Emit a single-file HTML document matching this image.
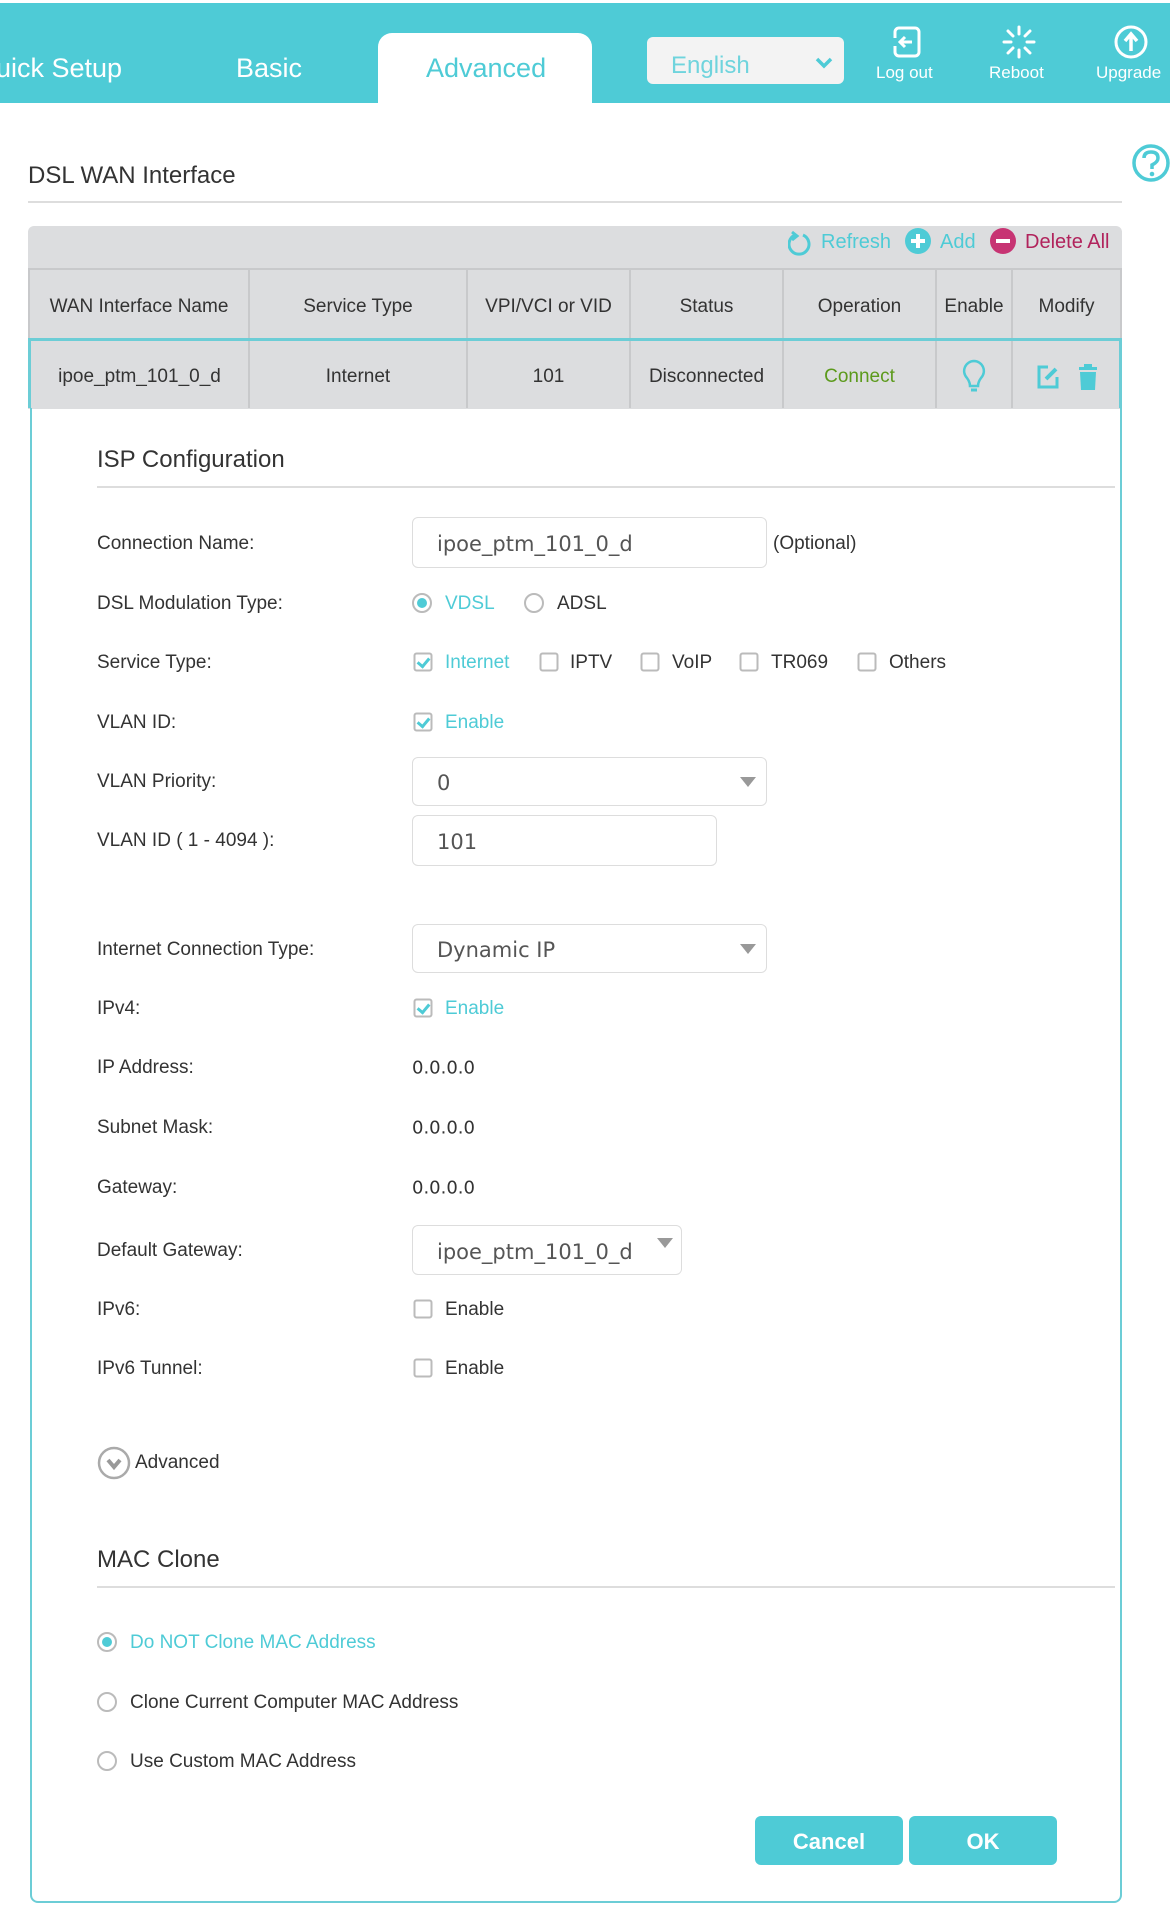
<!DOCTYPE html>
<html><head><meta charset="utf-8"><style>
*{margin:0;padding:0;box-sizing:border-box}
body{width:1170px;height:1929px;background:#fff;position:relative;overflow:hidden;font-family:"Liberation Sans",sans-serif;color:#333}
.a{position:absolute;white-space:nowrap}
.hd{position:absolute;left:0;top:3px;width:1170px;height:100px;background:#4ecbd6}
.nav{color:#fff;font-size:27px;top:53px}
.ic{color:#fff;font-size:17px;top:63px}
.lbl{left:97px;font-size:19px;color:#333;transform:translateY(-45%)}
.val{font-size:19px;transform:translateY(-45%)}
.box{position:absolute;border:1px solid #ddd;border-radius:6px;background:#fff;font-family:"DejaVu Sans",sans-serif;font-size:21px;color:#555;padding-left:24px;padding-top:3px;display:flex;align-items:center}
.tri{position:absolute;right:10px;top:50%;margin-top:-5px;width:0;height:0;border-left:8px solid transparent;border-right:8px solid transparent;border-top:10px solid #999}
.cb{position:absolute;width:19px;height:19px;border:2px solid #bbb;border-radius:3px;background:#fff;transform:translate(-50%,-50%)}
.cb.on::after{content:"";position:absolute;left:4px;top:1px;width:5px;height:9px;border:solid #4ecbd6;border-width:0 3px 3px 0;transform:rotate(40deg)}
.rd{position:absolute;width:20px;height:20px;border:2px solid #bbb;border-radius:50%;background:#fff;transform:translate(-50%,-50%)}
.rd.on::after{content:"";position:absolute;left:3px;top:3px;width:10px;height:10px;border-radius:50%;background:#4ecbd6}
.t{color:#4ecbd6}
.th{position:absolute;top:269px;height:70px;display:flex;align-items:center;justify-content:center;font-size:19px;color:#333;border-right:2px solid #c8c9cb;padding-top:6px}
.td{position:absolute;top:341px;height:67px;display:flex;align-items:center;justify-content:center;font-size:19px;color:#333;border-right:2px solid #c8c9cb;padding-top:4px}
.btn{position:absolute;top:1816px;height:49px;width:148px;background:#4ecbd6;border-radius:6px;color:#fff;font-weight:bold;font-size:22px;display:flex;align-items:center;justify-content:center;padding-top:3px}
</style></head><body>
<div class="hd"></div>
<div class="a nav" style="left:-4px">uick Setup</div>
<div class="a nav" style="left:236px">Basic</div>
<div class="a" style="left:378px;top:33px;width:214px;height:70px;background:#fff;border-radius:14px 14px 0 0"></div>
<div class="a nav" style="left:426px;color:#4ecbd6">Advanced</div>
<div class="a" style="left:647px;top:37px;width:197px;height:47px;background:#f3f3f3;border-radius:6px"></div>
<div class="a" style="left:671px;top:52px;font-size:24px;color:#6fd4dd">English</div>
<svg class="a" style="left:814px;top:56px" width="20" height="14" viewBox="0 0 20 14"><path d="M3 3 L10 10 L17 3" stroke="#4ecbd6" stroke-width="3.5" fill="none"/></svg>
<svg class="a" style="left:892px;top:25px" width="30" height="34" viewBox="0 0 30 34"><rect x="3" y="3" width="24" height="28" rx="4" fill="none" stroke="#fff" stroke-width="3"/><path d="M9 17 H20 M13 12 L8 17 L13 22" stroke="#fff" stroke-width="3" fill="none"/><rect x="0" y="13" width="5" height="8" fill="#4ecbd6"/></svg>
<div class="a ic" style="left:876px">Log out</div>
<svg class="a" style="left:1001px;top:24px" width="36" height="36" viewBox="0 0 36 36" stroke="#fff" stroke-width="3" stroke-linecap="round"><path d="M18 3V10 M18 26V33 M3 18H10 M26 18H33 M7 7L12 12 M24 24L29 29 M29 7L24 12 M12 24L7 29"/></svg>
<div class="a ic" style="left:989px">Reboot</div>
<svg class="a" style="left:1113px;top:24px" width="36" height="36" viewBox="0 0 36 36"><circle cx="18" cy="18" r="15" fill="none" stroke="#fff" stroke-width="3"/><path d="M18 27V12 M12 17L18 10L24 17" stroke="#fff" stroke-width="3.5" fill="none"/></svg>
<div class="a ic" style="left:1096px">Upgrade</div>
<svg class="a" style="left:1131px;top:143px" width="40" height="40" viewBox="0 0 40 40"><circle cx="20" cy="20" r="17" fill="none" stroke="#4ecbd6" stroke-width="3.5"/><path d="M13 15 Q13 9 20 9 Q27 9 27 15 Q27 19 21 22 V26" stroke="#4ecbd6" stroke-width="3.5" fill="none"/><circle cx="21" cy="31" r="2.3" fill="#4ecbd6"/></svg>

<div class="a" style="left:28px;top:162px;font-size:24px;color:#333">DSL WAN Interface</div>
<div class="a" style="left:28px;top:201px;width:1094px;height:2px;background:#ddd"></div>

<div class="a" style="left:28px;top:226px;width:1094px;height:183px;background:#dcdddf;border-radius:6px 6px 0 0"></div>
<svg class="a" style="left:788px;top:229px" width="24" height="28" viewBox="0 0 24 28"><path d="M7 6 A10 10 0 1 0 15 6" stroke="#4ecbd6" stroke-width="3" fill="none"/><path d="M4 3 L9 7 L4 11" stroke="#4ecbd6" stroke-width="3" fill="none"/></svg>
<div class="a" style="left:821px;top:231px;font-size:20px;color:#4ecbd6">Refresh</div>
<svg class="a" style="left:905px;top:228px" width="26" height="26" viewBox="0 0 26 26"><circle cx="13" cy="13" r="13" fill="#4ecbd6"/><path d="M13 6V20 M6 13H20" stroke="#fff" stroke-width="4"/></svg>
<div class="a" style="left:940px;top:231px;font-size:20px;color:#4ecbd6">Add</div>
<svg class="a" style="left:990px;top:228px" width="26" height="26" viewBox="0 0 26 26"><circle cx="13" cy="13" r="13" fill="#c73473"/><path d="M6 13H20" stroke="#fff" stroke-width="4"/></svg>
<div class="a" style="left:1025px;top:231px;font-size:20px;color:#b1235c">Delete All</div>

<div class="a" style="left:28px;top:268px;width:1094px;height:2px;background:#c8c9cb"></div>
<div class="th" style="left:28px;width:222px;border-left:2px solid #c8c9cb">WAN Interface Name</div>
<div class="th" style="left:250px;width:218px">Service Type</div>
<div class="th" style="left:468px;width:163px">VPI/VCI or VID</div>
<div class="th" style="left:631px;width:153px">Status</div>
<div class="th" style="left:784px;width:153px">Operation</div>
<div class="th" style="left:937px;width:76px">Enable</div>
<div class="th" style="left:1013px;width:109px">Modify</div>
<div class="a" style="left:28px;top:338px;width:1094px;height:3px;background:#6ccdd6"></div>
<div class="td" style="left:28px;width:222px;border-left:3px solid #6ccdd6">ipoe_ptm_101_0_d</div>
<div class="td" style="left:250px;width:218px">Internet</div>
<div class="td" style="left:468px;width:163px">101</div>
<div class="td" style="left:631px;width:153px">Disconnected</div>
<div class="td" style="left:784px;width:153px;color:#5c9a1c">Connect</div>
<div class="td" style="left:937px;width:76px"><svg width="26" height="36" viewBox="0 0 26 36"><path d="M13 2 A10 10 0 0 0 6 19 Q9 23 9 27 H17 Q17 23 20 19 A10 10 0 0 0 13 2Z" fill="none" stroke="#4ecbd6" stroke-width="2.5"/><path d="M10 31H16" stroke="#4ecbd6" stroke-width="3"/></svg></div>
<div class="td" style="left:1013px;width:109px;border-right:3px solid #6ccdd6;gap:16px"><svg width="28" height="28" viewBox="0 0 28 28"><path d="M14 4H5V24H23V14" fill="none" stroke="#4ecbd6" stroke-width="3"/><path d="M12 16L22 6" stroke="#4ecbd6" stroke-width="4"/></svg><svg width="20" height="28" viewBox="0 0 20 28"><rect x="1" y="4" width="18" height="3" fill="#4ecbd6"/><rect x="6" y="1" width="8" height="3" fill="#4ecbd6"/><path d="M2 9H18L17 27H3Z" fill="#4ecbd6"/></svg></div>

<div class="a" style="left:30px;top:408px;width:1092px;height:1495px;border:2px solid #6ccdd6;border-top:none;border-radius:0 0 8px 8px"></div>

<div class="a" style="left:97px;top:446px;font-size:24px">ISP Configuration</div>
<div class="a" style="left:97px;top:486px;width:1018px;height:2px;background:#ddd"></div>

<div class="a lbl" style="top:543px">Connection Name:</div>
<div class="box" style="left:412px;top:517px;width:355px;height:51px">ipoe_ptm_101_0_d</div>
<div class="a val" style="left:773px;top:543px">(Optional)</div>

<div class="a lbl" style="top:603px">DSL Modulation Type:</div>
<div class="rd on" style="left:422px;top:603px"></div><div class="a val t" style="left:445px;top:603px">VDSL</div>
<div class="rd" style="left:534px;top:603px"></div><div class="a val" style="left:557px;top:603px">ADSL</div>

<div class="a lbl" style="top:662px">Service Type:</div>
<div class="cb on" style="left:423px;top:662px"></div><div class="a val t" style="left:445px;top:662px">Internet</div>
<div class="cb" style="left:549px;top:662px"></div><div class="a val" style="left:570px;top:662px">IPTV</div>
<div class="cb" style="left:650px;top:662px"></div><div class="a val" style="left:672px;top:662px">VoIP</div>
<div class="cb" style="left:749px;top:662px"></div><div class="a val" style="left:771px;top:662px">TR069</div>
<div class="cb" style="left:867px;top:662px"></div><div class="a val" style="left:889px;top:662px">Others</div>

<div class="a lbl" style="top:722px">VLAN ID:</div>
<div class="cb on" style="left:423px;top:722px"></div><div class="a val t" style="left:445px;top:722px">Enable</div>

<div class="a lbl" style="top:781px">VLAN Priority:</div>
<div class="box" style="left:412px;top:757px;width:355px;height:49px">0<span class="tri"></span></div>

<div class="a lbl" style="top:840px">VLAN ID ( 1 - 4094 ):</div>
<div class="box" style="left:412px;top:815px;width:305px;height:51px">101</div>

<div class="a lbl" style="top:949px">Internet Connection Type:</div>
<div class="box" style="left:412px;top:924px;width:355px;height:49px">Dynamic IP<span class="tri"></span></div>

<div class="a lbl" style="top:1008px">IPv4:</div>
<div class="cb on" style="left:423px;top:1008px"></div><div class="a val t" style="left:445px;top:1008px">Enable</div>

<div class="a lbl" style="top:1067px">IP Address:</div>
<div class="a val" style="left:412px;top:1067px;font-family:'DejaVu Sans',sans-serif;font-size:18px">0.0.0.0</div>
<div class="a lbl" style="top:1127px">Subnet Mask:</div>
<div class="a val" style="left:412px;top:1127px;font-family:'DejaVu Sans',sans-serif;font-size:18px">0.0.0.0</div>
<div class="a lbl" style="top:1187px">Gateway:</div>
<div class="a val" style="left:412px;top:1187px;font-family:'DejaVu Sans',sans-serif;font-size:18px">0.0.0.0</div>

<div class="a lbl" style="top:1250px">Default Gateway:</div>
<div class="box" style="left:412px;top:1225px;width:270px;height:50px">ipoe_ptm_101_0_d<span class="tri" style="right:8px;margin-top:-12px"></span></div>

<div class="a lbl" style="top:1309px">IPv6:</div>
<div class="cb" style="left:423px;top:1309px"></div><div class="a val" style="left:445px;top:1309px">Enable</div>
<div class="a lbl" style="top:1368px">IPv6 Tunnel:</div>
<div class="cb" style="left:423px;top:1368px"></div><div class="a val" style="left:445px;top:1368px">Enable</div>

<svg class="a" style="left:97px;top:1446px" width="34" height="34" viewBox="0 0 34 34"><circle cx="17" cy="17" r="15" fill="none" stroke="#aaa" stroke-width="2.5"/><path d="M11 14 L17 21 L23 14" stroke="#999" stroke-width="4" fill="none"/></svg>
<div class="a val" style="left:135px;top:1462px">Advanced</div>

<div class="a" style="left:97px;top:1546px;font-size:24px">MAC Clone</div>
<div class="a" style="left:97px;top:1586px;width:1018px;height:2px;background:#ddd"></div>

<div class="rd on" style="left:107px;top:1642px"></div><div class="a val t" style="left:130px;top:1642px">Do NOT Clone MAC Address</div>
<div class="rd" style="left:107px;top:1702px"></div><div class="a val" style="left:130px;top:1702px">Clone Current Computer MAC Address</div>
<div class="rd" style="left:107px;top:1761px"></div><div class="a val" style="left:130px;top:1761px">Use Custom MAC Address</div>

<div class="btn" style="left:755px">Cancel</div>
<div class="btn" style="left:909px">OK</div>
</body></html>
